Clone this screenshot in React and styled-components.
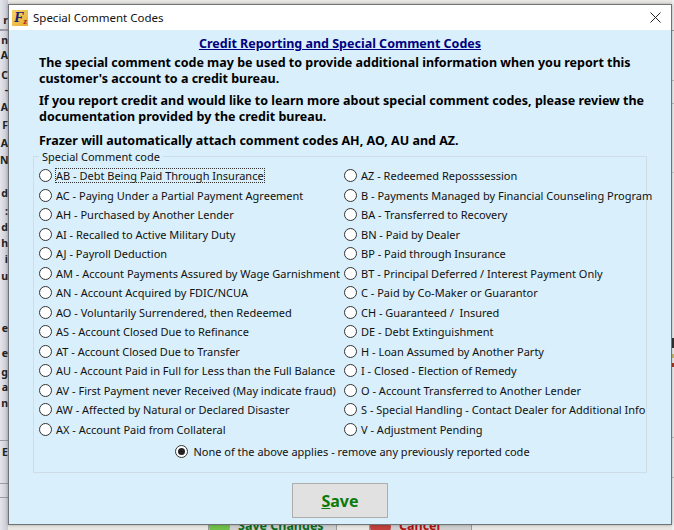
import React from 'react'
import styled, { createGlobalStyle } from 'styled-components'

const leftCodes = [
    ['AB - Debt Being Paid Through Insurance', true],
    ['AC - Paying Under a Partial Payment Agreement'],
    ['AH - Purchased by Another Lender'],
    ['AI - Recalled to Active Military Duty'],
    ['AJ - Payroll Deduction'],
    ['AM - Account Payments Assured by Wage Garnishment'],
    ['AN - Account Acquired by FDIC/NCUA'],
    ['AO - Voluntarily Surrendered, then Redeemed'],
    ['AS - Account Closed Due to Refinance'],
    ['AT - Account Closed Due to Transfer'],
    ['AU - Account Paid in Full for Less than the Full Balance'],
    ['AV - First Payment never Received (May indicate fraud)'],
    ['AW - Affected by Natural or Declared Disaster'],
    ['AX - Account Paid from Collateral'],
]

const rightCodes = [
    'AZ - Redeemed Reposssession',
    'B - Payments Managed by Financial Counseling Program',
    'BA - Transferred to Recovery',
    'BN - Paid by Dealer',
    'BP - Paid through Insurance',
    'BT - Principal Deferred / Interest Payment Only',
    'C - Paid by Co-Maker or Guarantor',
    'CH - Guaranteed /  Insured',
    'DE - Debt Extinguishment',
    'H - Loan Assumed by Another Party',
    'I - Closed - Election of Remedy',
    'O - Account Transferred to Another Lender',
    'S - Special Handling - Contact Dealer for Additional Info',
    'V - Adjustment Pending',
]

// what peeks out from the main program behind the dialog, left edge, top to bottom
const behindLeft = [
    ['', 13], ['r', 14], ['', 2], ['', 2, true], ['', 2], ['n', 14], ['', 1], ['A', 14], ['', 6], ['C', 14], ['-', 14], ['', 4],
    ['A', 14], ['', 4], ['F', 14], ['', 4], ['A', 14], ['', 3], ['N', 14], ['', 19], ['d', 14], ['', 4], [':', 14], ['', 2],
    ['d', 14], ['', 2], ['h', 14], ['', 2], ['i', 14], ['', 3], ['u', 14], ['', 38], ['e', 14], ['', 11], ['e', 14], ['', 5],
    ['g', 14], ['', 1], ['a', 14], ['', 2], ['n', 14], ['', 30], ['', 1, true], ['', 4], ['E', 14], ['', 24], ['', 1, true],
    ['', 13], ['', 1, true],
]

const behindRight = [
    [30, '#f0f0f0'], [1, '#a0a0a0'], [49, '#f0f0f0'], [1, '#c0c0c0'], [22, '#f0f0f0'], [1, '#c0c0c0'], [68, '#f0f0f0'], [1, '#d0d0d0'],
    [165, '#f0f0f0'], [10, '#333'], [6, '#f0f0f0'], [4, '#cdbb70'], [5, '#f0f0f0'], [4, '#a83a20'], [70, '#f0f0f0'], [1, '#c0c0c0'], [39, '#f0f0f0'], [1, '#c0c0c0'],
]

const App = () => {
    return (
        <Desktop>
            <GlobalStyle />
            <Behind>
                <BehindLeft>
                    {behindLeft.map(([txt, h, line], i) => (
                        <BehindRow key={i} $h={h} $line={line}>{txt}</BehindRow>
                    ))}
                </BehindLeft>
                <BehindMiddle>
                    <BehindButton $w={129}>
                        <BehindDot $color="#6fbf4a" />
                        <BehindLabel $color="#0a6a1a">Save Changes</BehindLabel>
                    </BehindButton>
                    <BehindButton $w={103}>
                        <BehindDot $color="#c0403c" />
                        <BehindLabel $color="#b01010">Cancel</BehindLabel>
                    </BehindButton>
                </BehindMiddle>
                <BehindRight>
                    {behindRight.map(([h, c], i) => (
                        <BehindMark key={i} $h={h} $c={c} />
                    ))}
                </BehindRight>
            </Behind>
            <WindowFrame>
                <TitleBar>
                    <AppIcon>
                        <span>F</span>
                        <small>z</small>
                    </AppIcon>
                    <TitleText>Special Comment Codes</TitleText>
                    <CloseIcon viewBox="0 0 11 11">
                        <path d="M0.5 0.5 L10.5 10.5 M10.5 0.5 L0.5 10.5" />
                    </CloseIcon>
                </TitleBar>
                <Content>
                    <Heading>Credit Reporting and Special Comment Codes</Heading>
                    <Intro $gap={6}>
                        The special comment code may be used to provide additional information when you report this<br />
                        customer's account to a credit bureau.
                    </Intro>
                    <Intro $gap={8}>
                        If you report credit and would like to learn more about special comment codes, please review the<br />
                        documentation provided by the credit bureau.
                    </Intro>
                    <Intro $gap={7}>Frazer will automatically attach comment codes AH, AO, AU and AZ.</Intro>
                    <GroupBox>
                        <Legend>Special Comment code</Legend>
                        <CodeGrid>
                            <CodeColumn>
                                {leftCodes.map(([label, focused]) => (
                                    <CodeRow key={label}>
                                        <Radio />
                                        <CodeLabel $focused={focused}>{label}</CodeLabel>
                                    </CodeRow>
                                ))}
                            </CodeColumn>
                            <CodeColumn>
                                {rightCodes.map((label) => (
                                    <CodeRow key={label}>
                                        <Radio />
                                        <CodeLabel>{label}</CodeLabel>
                                    </CodeRow>
                                ))}
                            </CodeColumn>
                        </CodeGrid>
                        <NoneRow>
                            <Radio $checked />
                            <CodeLabel>None of the above applies - remove any previously reported code</CodeLabel>
                        </NoneRow>
                    </GroupBox>
                    <Footer>
                        <SaveButton><u>S</u>ave</SaveButton>
                    </Footer>
                </Content>
            </WindowFrame>
        </Desktop>
    )
}

export default App

const GlobalStyle = createGlobalStyle`
    html, body {
        margin: 0;
        padding: 0;
        background: #f0f0f0;
    }
    * {
        box-sizing: border-box;
    }
`

const Desktop = styled.div`
    position: relative;
    width: 674px;
    height: 530px;
    overflow: hidden;
    background: #f0f0f0;
    font-family: "Noto Sans", "DejaVu Sans", sans-serif;
`

const Behind = styled.div`
    display: flex;
    width: 674px;
    height: 530px;
    overflow: hidden;
`

const BehindLeft = styled.div`
    flex: none;
    width: 8px;
    height: 100%;
    overflow: hidden;
    display: flex;
    flex-direction: column;
    background: linear-gradient(to right, #e4e4ea, #c8c8d4);
`

const BehindRow = styled.div`
    flex: none;
    height: ${(p) => p.$h}px;
    background: ${(p) => (p.$line ? '#9a9aa2' : 'transparent')};
    font-weight: 700;
    font-size: 10.5px;
    line-height: ${(p) => p.$h}px;
    text-align: right;
    color: #222;
`

const BehindMiddle = styled.div`
    flex: 1;
    display: flex;
    gap: 32px;
    padding: 512px 0 0 200px;
    background: #e9e7e3;
`

const BehindButton = styled.div`
    flex: none;
    display: flex;
    gap: 8px;
    width: ${(p) => p.$w}px;
    height: 30px;
    padding-top: 3px;
    background: #cfcfcf;
    border: 1px solid #999;
`

const BehindDot = styled.span`
    flex: none;
    width: 21px;
    height: 21px;
    border-radius: 50%;
    background: ${(p) => p.$color};
`

const BehindLabel = styled.span`
    font-weight: 700;
    font-size: 12.5px;
    line-height: 19px;
    color: ${(p) => p.$color};
`

const BehindRight = styled.div`
    flex: none;
    width: 2px;
    display: flex;
    flex-direction: column;
`

const BehindMark = styled.div`
    flex: none;
    height: ${(p) => p.$h}px;
    background: ${(p) => p.$c};
`

const WindowFrame = styled.div`
    position: absolute;
    left: 8px;
    top: 4px;
    width: 664px;
    height: 521px;
    display: flex;
    flex-direction: column;
    background: #d9effb;
    border: 1px solid #6f7478;
    box-shadow: 0 0 3px rgba(0, 0, 0, 0.3);
`

const TitleBar = styled.div`
    display: flex;
    align-items: center;
    height: 25px;
    padding: 0 10px 0 3px;
    background: #fff;
    flex: none;
`

const AppIcon = styled.div`
    position: relative;
    flex: none;
    width: 16px;
    height: 16px;
    background: linear-gradient(135deg, #f6d768, #e8ab2e);
    color: #1c2478;
    font-family: "Liberation Serif", serif;
    font-style: italic;
    font-weight: 700;
    font-size: 15px;
    line-height: 15px;
    padding-left: 2px;

    small {
        position: absolute;
        right: 1px;
        bottom: 0;
        font-size: 9px;
        line-height: 9px;
        color: #b02020;
    }
`

const TitleText = styled.span`
    margin-left: 5px;
    font-size: 11.5px;
    color: #111;
    flex: 1;
`

const CloseIcon = styled.svg`
    width: 11px;
    height: 11px;
    fill: none;
    stroke: #222;
    stroke-width: 1;
`

const Content = styled.div`
    flex: 1;
    padding: 6px 24px 0 24px;
    display: flex;
    flex-direction: column;
`

const Heading = styled.div`
    text-align: center;
    color: #000080;
    font-weight: 700;
    font-size: 12.5px;
    line-height: 16px;
    text-decoration: underline;
    margin-bottom: 3px;
`

const Intro = styled.p`
    margin: 0 0 ${(p) => p.$gap}px 6px;
    color: #000;
    font-weight: 700;
    font-size: 12.5px;
    line-height: 16px;
    white-space: nowrap;
`

const GroupBox = styled.div`
    position: relative;
    width: 614px;
    height: 317px;
    border: 1px solid #cfdde6;
    padding: 9px 0 0 5px;
`

const Legend = styled.span`
    position: absolute;
    left: 5px;
    top: -7px;
    padding: 0 3px;
    background: #d9effb;
    font-size: 11px;
    line-height: 13px;
    color: #111;
`

const CodeGrid = styled.div`
    display: grid;
    grid-template-columns: 305px 1fr;
`

const CodeColumn = styled.div`
    display: flex;
    flex-direction: column;
`

const CodeRow = styled.div`
    display: flex;
    align-items: center;
    height: 19.5px;
    gap: 4px;
    white-space: nowrap;
`

const Radio = styled.span`
    position: relative;
    flex: none;
    width: 13px;
    height: 13px;
    border-radius: 50%;
    background: #fff;
    border: 1px solid #333;

    &::after {
        content: '';
        display: ${(p) => (p.$checked ? 'block' : 'none')};
        position: absolute;
        inset: 2px;
        border-radius: 50%;
        background: #222;
    }
`

const CodeLabel = styled.span`
    font-size: 11px;
    line-height: 13px;
    color: #111;
    white-space: pre;
    outline: ${(p) => (p.$focused ? '1px dotted #333' : 'none')};
`

const NoneRow = styled.div`
    display: flex;
    align-items: center;
    justify-content: center;
    gap: 5px;
    margin-top: 3px;
    padding-left: 20px;
    height: 19px;
`

const Footer = styled.div`
    display: flex;
    justify-content: center;
    padding-top: 10px;
`

const SaveButton = styled.button`
    width: 96px;
    height: 35px;
    background: #e1e1e1;
    border: 1px solid #adadad;
    color: #0a7a0a;
    font-family: "Noto Sans", sans-serif;
    font-weight: 700;
    font-size: 16px;
    padding: 0;
`
